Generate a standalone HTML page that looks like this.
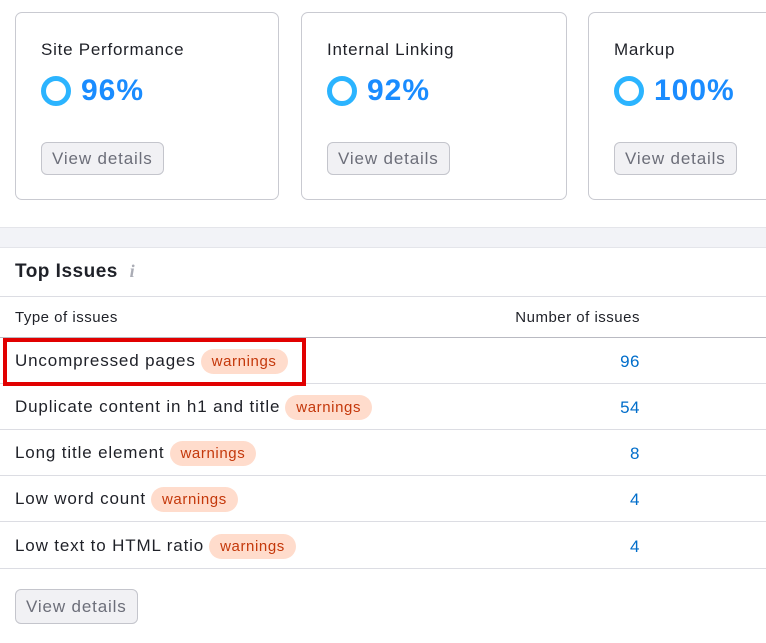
<!DOCTYPE html>
<html><head><style>
body{margin:0;width:766px;height:643px;overflow:hidden;background:#fff;font-family:"Liberation Sans",Arial,sans-serif;color:#1f2128;position:relative}
.card{position:absolute;top:12px;width:264px;height:188px;border:1px solid #c9cad1;border-radius:7px;box-sizing:border-box;background:#fff}
.card .t{position:absolute;left:25px;top:27px;font-size:17px;letter-spacing:0.75px}
.card .p{position:absolute;left:25px;top:61px;font-size:30px;font-weight:bold;color:#1a8cff;display:flex;align-items:center;letter-spacing:1px}
.card .p svg{margin-right:10px}
.btn{position:absolute;border:1px solid #c4c5cc;background:#f1f1f4;border-radius:6px;font-size:17px;color:#6c6e79;height:33px;line-height:32px;padding:0 10px;box-sizing:border-box;letter-spacing:0.85px}
.band{position:absolute;left:0;top:227px;width:766px;height:19px;background:#f2f3f7;border-top:1px solid #e4e5ea;border-bottom:1px solid #e4e5ea}
.row{position:absolute;left:0;width:766px;border-bottom:1px solid #dcdde3;font-size:17px;box-sizing:border-box;letter-spacing:0.85px}
.row .n{position:absolute;right:126px;color:#006dca;letter-spacing:0.5px}
.tag{display:inline-block;background:#ffdccc;color:#c4380b;border-radius:13px;font-size:15px;padding:0 11px;height:25px;line-height:25px;margin-left:5px;vertical-align:middle;letter-spacing:0.6px}
</style></head><body>
<div class="card" style="left:15px"><div class="t">Site Performance</div><div class="p"><svg width="30" height="30" viewBox="0 0 30 30"><circle cx="15" cy="15" r="12.5" fill="none" stroke="#2bb4ff" stroke-width="5"/></svg>96%</div><div class="btn" style="left:25px;top:129px">View details</div></div>
<div class="card" style="left:301px;width:266px"><div class="t">Internal Linking</div><div class="p"><svg width="30" height="30" viewBox="0 0 30 30"><circle cx="15" cy="15" r="12.5" fill="none" stroke="#2bb4ff" stroke-width="5"/></svg>92%</div><div class="btn" style="left:25px;top:129px">View details</div></div>
<div class="card" style="left:588px;width:200px"><div class="t">Markup</div><div class="p"><svg width="30" height="30" viewBox="0 0 30 30"><circle cx="15" cy="15" r="12.5" fill="none" stroke="#2bb4ff" stroke-width="5"/></svg>100%</div><div class="btn" style="left:25px;top:129px">View details</div></div>
<div class="band"></div>
<div style="position:absolute;left:15px;top:261px;font-size:19px;font-weight:bold;letter-spacing:0.5px">Top Issues <span style="color:#aaacb5;font-style:italic;font-family:'Liberation Serif',serif;font-size:18px;margin-left:6px">i</span></div>
<div class="row" style="top:296px;height:42px;border-top:1px solid #dcdde3;border-bottom:1px solid #b9bac2;font-size:15px;letter-spacing:0.5px"><span style="position:absolute;left:15px;top:12px">Type of issues</span><span style="position:absolute;right:126px;top:12px">Number of issues</span></div>
<div class="row" style="top:338px;height:46px"><span style="position:absolute;left:15px;top:11px">Uncompressed pages<span class="tag">warnings</span></span><span class="n" style="top:14px">96</span></div>
<div style="position:absolute;left:3px;top:338px;width:295px;height:40px;border:4px solid #e10000"></div>
<div class="row" style="top:384px;height:46px"><span style="position:absolute;left:15px;top:11px">Duplicate content in h1 and title<span class="tag">warnings</span></span><span class="n" style="top:14px">54</span></div>
<div class="row" style="top:430px;height:46px"><span style="position:absolute;left:15px;top:11px">Long title element<span class="tag">warnings</span></span><span class="n" style="top:14px">8</span></div>
<div class="row" style="top:476px;height:46px"><span style="position:absolute;left:15px;top:11px">Low word count<span class="tag">warnings</span></span><span class="n" style="top:14px">4</span></div>
<div class="row" style="top:522px;height:47px"><span style="position:absolute;left:15px;top:12px">Low text to HTML ratio<span class="tag">warnings</span></span><span class="n" style="top:15px">4</span></div>
<div class="btn" style="left:15px;top:589px;height:35px;line-height:34px">View details</div>
</body></html>
